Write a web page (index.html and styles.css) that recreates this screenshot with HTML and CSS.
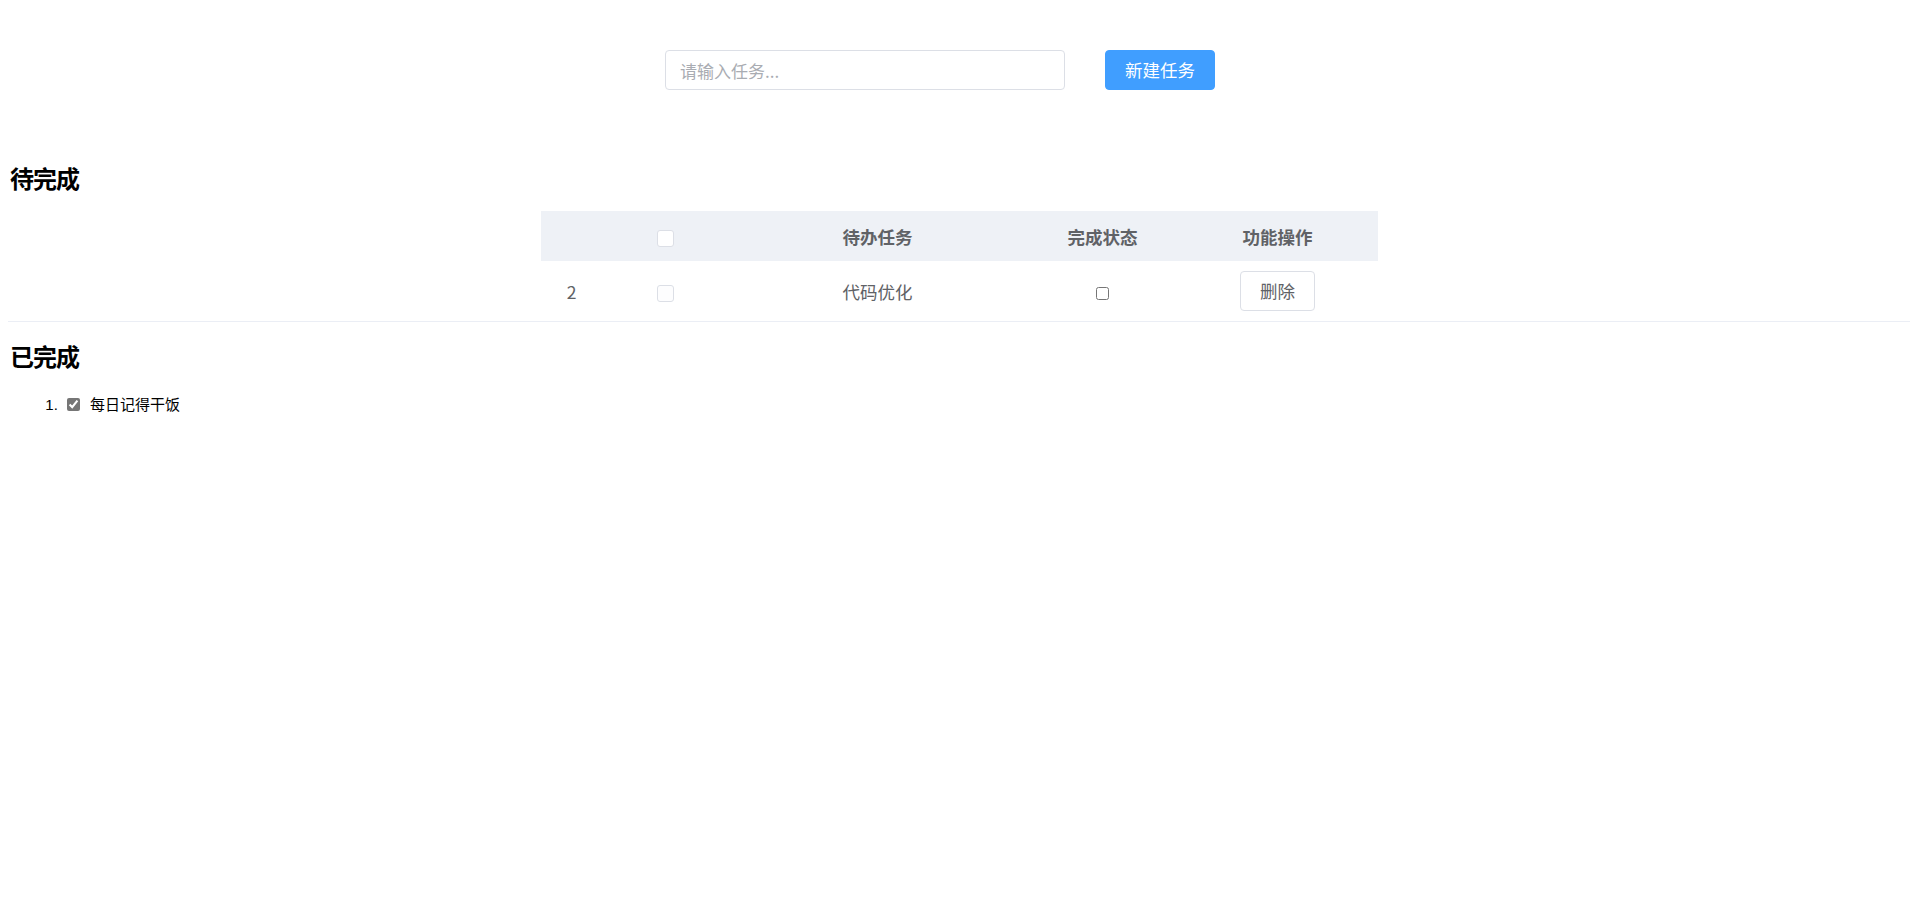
FILE: index.html
```html
<!DOCTYPE html>
<html lang="zh-CN">
<head>
<meta charset="utf-8">
<title>任务列表</title>
<link rel="stylesheet" href="styles.css">
</head>
<body>
<div class="page">
  <div class="toolbar">
    <input class="task-input" type="text" placeholder="请输入任务...">
    <button class="btn-primary" type="button">新建任务</button>
  </div>

  <h2 class="section-title first">待完成</h2>
  <div class="table-wrap">
    <table class="todo-table">
      <colgroup>
        <col class="c-id">
        <col class="c-sel">
        <col class="c-task">
        <col class="c-state">
        <col class="c-op">
      </colgroup>
      <thead>
        <tr>
          <th></th>
          <th><span class="el-check"></span></th>
          <th>待办任务</th>
          <th>完成状态</th>
          <th>功能操作</th>
        </tr>
      </thead>
      <tbody>
        <tr>
          <td>2</td>
          <td><span class="el-check row"></span></td>
          <td>代码优化</td>
          <td><input class="native-check" type="checkbox"></td>
          <td><button class="btn-default" type="button">删除</button></td>
        </tr>
      </tbody>
    </table>
  </div>

  <h2 class="section-title second">已完成</h2>
  <ol class="done-list">
    <li><input class="done-check" type="checkbox" checked><span class="done-text">每日记得干饭</span></li>
  </ol>
</div>
</body>
</html>
```

FILE: styles.css
```css
html, body {
  margin: 0;
  padding: 0;
  background: #ffffff;
}

body {
  font-family: "Noto Sans CJK SC", "Noto Sans", "Liberation Sans", sans-serif;
  color: #000;
}

.page {
  padding: 0 8px;
}

.toolbar {
  display: flex;
  align-items: center;
  gap: 40px;
  padding-top: 50px;
  padding-left: 657px;
}

.task-input {
  box-sizing: border-box;
  width: 400px;
  height: 40px;
  border: 1px solid #dcdfe6;
  border-radius: 4px;
  padding: 0 14px;
  font-family: "Noto Sans CJK SC", sans-serif;
  font-size: 17px;
  color: #606266;
  outline: none;
  background: #fff;
}

.task-input::placeholder {
  color: #a9acb2;
}

.btn-primary {
  box-sizing: border-box;
  height: 40px;
  padding: 0 19px;
  border: 1px solid #409eff;
  background: #409eff;
  color: #fff;
  border-radius: 4px;
  font-family: "Noto Sans CJK SC", sans-serif;
  font-size: 17.5px;
  line-height: 1;
  cursor: pointer;
}

.section-title {
  font-size: 24px;
  font-weight: 700;
  line-height: 32px;
  margin: 0;
  padding-left: 2px;
  letter-spacing: -1px;
}

.section-title.first {
  margin-top: 72px;
  margin-bottom: 17px;
}

.section-title.second {
  margin-top: 18px;
}

.table-wrap {
  border-bottom: 1px solid #ebeef5;
}

.todo-table {
  width: 837px;
  margin: 0 auto;
  border-collapse: collapse;
  table-layout: fixed;
  font-size: 17.5px;
  color: #606266;
}

.c-id { width: 62px; }
.c-sel { width: 125px; }
.c-task { width: 300px; }
.c-state { width: 150px; }
.c-op { width: 200px; }

.todo-table th {
  height: 50px;
  padding: 0;
  background: #eef1f6;
  font-weight: 700;
  text-align: center;
  vertical-align: middle;
}

.todo-table td {
  height: 60px;
  padding: 0;
  text-align: center;
  vertical-align: middle;
}

.el-check {
  display: inline-block;
  box-sizing: border-box;
  width: 17px;
  height: 17px;
  border: 1px solid #dcdfe6;
  border-radius: 3px;
  background: #fff;
  vertical-align: middle;
}

.el-check.row {
  background: #fdfdfe;
}

.native-check {
  width: 13px;
  height: 13px;
  margin: 0;
  vertical-align: middle;
}

.btn-default {
  box-sizing: border-box;
  height: 40px;
  padding: 0 19px;
  border: 1px solid #dcdfe6;
  border-radius: 4px;
  background: #fff;
  color: #606266;
  font-family: "Noto Sans CJK SC", sans-serif;
  font-size: 17.5px;
  line-height: 1;
  cursor: pointer;
}

.done-list {
  margin: 21px 0 0 0;
  padding-left: 54px;
  font-family: "Liberation Sans", "Noto Sans CJK SC", sans-serif;
  font-size: 15px;
  line-height: 22px;
}

.done-check {
  width: 13px;
  height: 13px;
  margin: 0 10px 0 5px;
  accent-color: #767676;
  vertical-align: -1px;
}

.done-text {
  font-family: "Noto Sans CJK SC", sans-serif;
}
```
